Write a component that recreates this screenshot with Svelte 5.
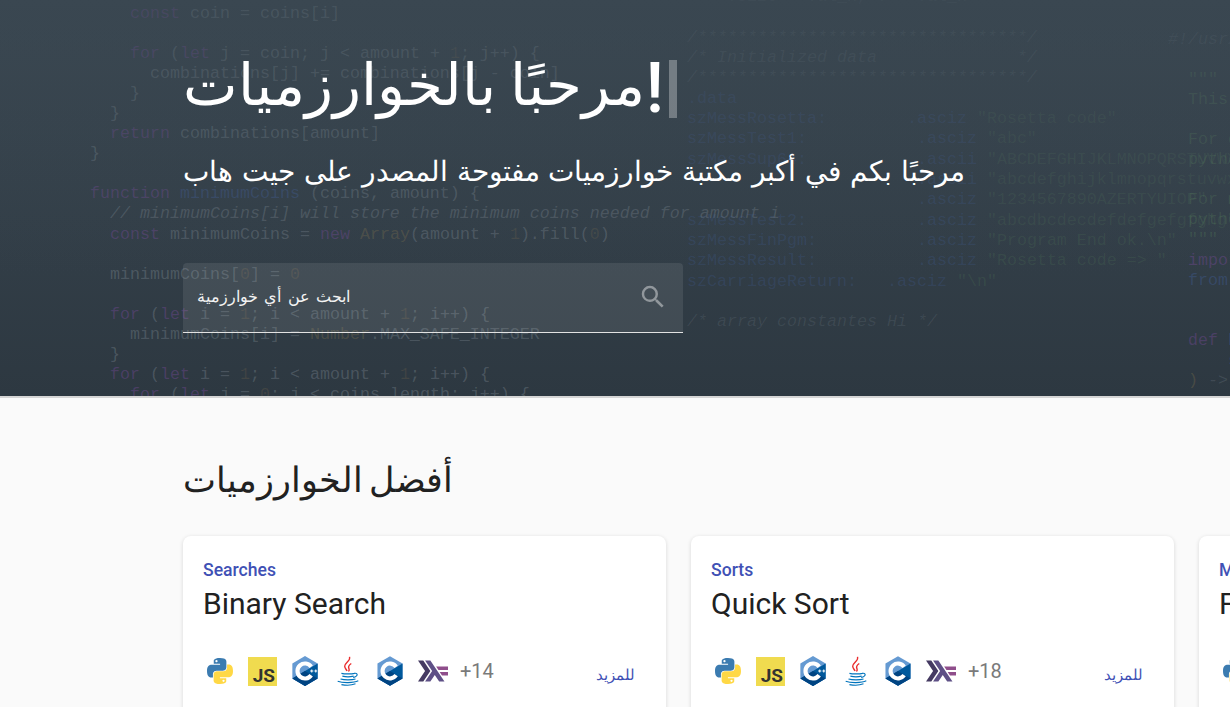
<script>
  const codeA = [
    ['    ', ['k', 'const'], ' coin = coins[i]'],
    [],
    ['    ', ['k', 'for'], ' (', ['k', 'let'], ' j = coin; j < amount + ', ['n', '1'], '; j++) {'],
    ['      combinations[j] += combinations[j - coin]'],
    ['    }'],
    ['  }'],
    ['  ', ['k', 'return'], ' combinations[amount]'],
    ['}'],
    [],
    [['k', 'function'], ' ', ['f', 'minimumCoins'], ' (coins, amount) {'],
    ['  ', ['cm', '// minimumCoins[i] will store the minimum coins needed for amount i']],
    ['  ', ['k', 'const'], ' minimumCoins = ', ['k', 'new'], ' ', ['y', 'Array'], '(amount + ', ['n', '1'], ').fill(', ['n', '0'], ')'],
    [],
    ['  minimumCoins[', ['n', '0'], '] = ', ['n', '0']],
    [],
    ['  ', ['k', 'for'], ' (', ['k', 'let'], ' i = ', ['n', '1'], '; i < amount + ', ['n', '1'], '; i++) {'],
    ['    minimumCoins[i] = ', ['y', 'Number'], '.MAX_SAFE_INTEGER'],
    ['  }'],
    ['  ', ['k', 'for'], ' (', ['k', 'let'], ' i = ', ['n', '1'], '; i < amount + ', ['n', '1'], '; i++) {'],
    ['    ', ['k', 'for'], ' (', ['k', 'let'], ' j = ', ['n', '0'], '; j < coins.length; j++) {']
  ];
  const pad = ' '.repeat(23);
  const codeB = [
    ['    .size   val_n, . - val_n'],
    [],
    [['cm', '/*********************************/']],
    [['cm', '/* Initialized data              */']],
    [['cm', '/*********************************/']],
    [['f', '.data']],
    [['f', 'szMessRosetta:'], '        ', ['f', '.asciz'], ' ', ['s', '"Rosetta code"']],
    [['f', 'szMessTest1:'], '           ', ['f', '.asciz'], ' ', ['s', '"abc"']],
    [['f', 'szMessSup64:'], '           ', ['f', '.ascii'], ' ', ['s', '"ABCDEFGHIJKLMNOPQRSTUVWXYZ"']],
    [pad, ['f', '.ascii'], ' ', ['s', '"abcdefghijklmnopqrstuvwxyz"']],
    [pad, ['f', '.asciz'], ' ', ['s', '"1234567890AZERTYUIOP"']],
    [['f', 'szMessTest2:'], '           ', ['f', '.asciz'], ' ', ['s', '"abcdbcdecdefdefgefgfghg"']],
    [['f', 'szMessFinPgm:'], '          ', ['f', '.asciz'], ' ', ['s', '"Program End ok.\\n"']],
    [['f', 'szMessResult:'], '          ', ['f', '.asciz'], ' ', ['s', '"Rosetta code => "']],
    [['f', 'szCarriageReturn:'], '   ', ['f', '.asciz'], ' ', ['s', '"\\n"']],
    [],
    [['cm', '/* array constantes Hi */']]
  ];
  const codeC = [
    [['cm', '#!/usr/bin/env python3']],
    [],
    ['  ', ['s', '"""']],
    ['  ', ['s', 'This module']],
    [],
    ['  ', ['s', 'For doctests']],
    ['  ', ['s', 'python3 -m']],
    [],
    ['  ', ['s', 'For manual']],
    ['  ', ['s', 'python3 x']],
    ['  ', ['s', '"""']],
    ['  ', ['k', 'import'], ' x'],
    ['  ', ['f', 'from'], ' x'],
    [],
    [],
    ['  ', ['k', 'def'], ' ', ['f', 'b']],
    ['      ', ['f', 's']],
    ['  ', ['y', ')'], ' -> x']
  ];
  const cards = [
    { cat: 'Searches', title: 'Binary Search', more: '+14' },
    { cat: 'Sorts', title: 'Quick Sort', more: '+18' },
    { cat: 'Maths', title: 'Fibonacci', more: '+16' }
  ];
</script>

{#snippet code(lines)}
  {#each lines as line}
    <div class="line">{#each line as part}{#if typeof part === 'string'}{part}{:else}<span class={part[0]}>{part[1]}</span>{/if}{/each}</div>
  {/each}
{/snippet}

{#snippet cpphex(plus)}
  <svg class="ic hex" viewBox="0 0 28 32" aria-hidden="true">
    <polygon points="14,0 27.5,8 27.5,24 14,32 .5,24 .5,8" fill="#659ad2" />
    <polygon points="27.5,8 27.5,24 14,32 .5,24 14,16" fill="#00599c" />
    <polygon points="14,16 .5,24 14,32 27.5,24" fill="#004482" />
    <path d="M20.6 11.5a8 8 0 1 0 0 9" fill="none" stroke="#fff" stroke-width="4.4" />
    {#if plus}
      <path d="M19.5 16h3.4M21.2 14.5v3M24 16h3M25.5 14.5v3" stroke="#fff" stroke-width="1.1" />
    {/if}
  </svg>
{/snippet}

<div class="page">
  <header class="hero">
    <div class="codebg" aria-hidden="true">
      <pre class="col a">{@render code(codeA)}</pre>
      <pre class="col b">{@render code(codeB)}</pre>
      <pre class="col c">{@render code(codeC)}</pre>
    </div>
    <div class="hero-inner">
      <h1><span class="typed">مرحبًا بالخوارزميات<span class="bang">!</span></span></h1>
      <p class="sub">مرحبًا بكم في أكبر مكتبة خوارزميات مفتوحة المصدر على جيت هاب</p>
      <div class="search">
        <span class="label">ابحث عن أي خوارزمية</span>
        <svg class="mag" viewBox="0 0 24 24" aria-hidden="true">
          <path d="M15.5 14h-.79l-.28-.27A6.47 6.47 0 0 0 16 9.5 6.5 6.5 0 1 0 9.5 16c1.61 0 3.09-.59 4.23-1.57l.27.28v.79l5 4.99L20.49 19l-4.99-5zm-6 0C7.01 14 5 11.99 5 9.5S7.01 5 9.5 5 14 7.01 14 9.5 11.99 14 9.5 14z" />
        </svg>
      </div>
    </div>
  </header>

  <main class="top">
    <h2>أفضل الخوارزميات</h2>
    <div class="cards">
      {#each cards as card}
        <article class="card">
          <div class="cat">{card.cat}</div>
          <div class="title">{card.title}</div>
          <div class="foot">
            <div class="icons">
              <svg class="ic py" viewBox="0 0 110 110" aria-hidden="true">
                <path fill="#3b7bb0" fill-rule="evenodd" d="M54.9 0C26.9 0 28.6 12.2 28.6 12.2v12.6h26.7v3.8H18S0 26.5 0 55s15.7 27.5 15.7 27.5h9.4V69.3s-.5-15.7 15.4-15.7h26.6s14.9.2 14.9-14.4V15S84.3 0 54.9 0zM40.1 8.5a4.8 4.8 0 1 1 0 9.6 4.8 4.8 0 0 1 0-9.6z" />
                <path fill="#ffd845" fill-rule="evenodd" transform="rotate(180 55 55)" d="M54.9 0C26.9 0 28.6 12.2 28.6 12.2v12.6h26.7v3.8H18S0 26.5 0 55s15.7 27.5 15.7 27.5h9.4V69.3s-.5-15.7 15.4-15.7h26.6s14.9.2 14.9-14.4V15S84.3 0 54.9 0zM40.1 8.5a4.8 4.8 0 1 1 0 9.6 4.8 4.8 0 0 1 0-9.6z" />
              </svg>
              <span class="js">JS</span>
              {@render cpphex(true)}
              <svg class="ic java" viewBox="0 0 26 32" aria-hidden="true">
                <path d="M14.5 1c2 4-5 6-5 10 0 2 1.500 3 2.500 5M16.500 8c-3 2-3.500 3.500-2.500 5.500 .5 1 .5 2-.5 3" fill="none" stroke="#ea2d2e" stroke-width="1.500" />
                <path d="M6 18.500c3 .8 11 .8 14 0M7 21.500c3 .7 9 .7 12 0M19.500 18.500c4-1 5 3-1 4.500M5 24.500c4 1.200 12 1.200 16 0M2 27c5 2 17 2 22-.5M6 30.500c5 1 11 .8 15-.8" fill="none" stroke="#0074bd" stroke-width="1.200" />
              </svg>
              {@render cpphex(false)}
              <svg class="ic hs" viewBox="0 0 17 12" aria-hidden="true">
                <path fill="#453a62" d="M0 12 4 6 0 0h3l4 6-4 6z" />
                <path fill="#5e5086" d="M4 12l4-6-4-6h3l8 12h-3L9.500 8.250 7 12z" />
                <path fill="#8f4e8b" d="M13.600 8.500 12.270 6.500H17v2zM11.600 5.500 10.270 3.500H17v2z" />
              </svg>
              <span class="more">{card.more}</span>
            </div>
            <a class="link" href="#top">للمزيد</a>
          </div>
        </article>
      {/each}
    </div>
  </main>
</div>

<style>
  :global(body) {
    margin: 0;
    background: #fafafa;
    font-family: Roboto, "Liberation Sans", sans-serif;
    overflow: hidden;
  }
  .page {
    height: 707px;
    overflow: hidden;
  }
  .hero {
    position: relative;
    height: 396px;
    overflow: hidden;
    background: linear-gradient(180deg, #3a4751 0%, #2d3841 100%);
    border-bottom: 2px solid #d5d5d5;
    color: #fff;
  }
  .codebg {
    position: absolute;
    inset: 0;
    pointer-events: none;
  }
  .codebg::after {
    content: "";
    position: absolute;
    inset: 0;
    background: linear-gradient(180deg, rgba(58, 71, 81, 0.5) 0%, rgba(50, 62, 71, 0) 70%);
  }
  .col {
    position: absolute;
    margin: 0;
    font-family: "Liberation Mono", monospace;
    font-size: 16.67px;
    line-height: 20px;
    white-space: pre;
  }
  .line {
    height: 20.05px;
  }
  .col.a {
    left: 90px;
    top: 4px;
    color: rgba(190, 200, 210, 0.21);
  }
  .col.b {
    left: 687px;
    top: -13px;
    line-height: 20.33px;
    color: rgba(190, 200, 210, 0.07);
  }
  .col.b .line {
    height: 20.33px;
  }
  .col.c {
    left: 1168px;
    top: 30px;
    color: rgba(190, 200, 210, 0.14);
  }
  .k { color: rgba(150, 80, 190, 0.28); }
  .n { color: rgba(210, 160, 90, 0.12); }
  .f { color: rgba(80, 120, 220, 0.22); }
  .y { color: rgba(210, 170, 90, 0.18); }
  .s { color: rgba(120, 190, 110, 0.16); }
  .cm { color: rgba(190, 200, 210, 0.1); font-style: italic; }
  .col.a .cm { color: rgba(190, 200, 210, 0.2); }
  .col.b .f { color: rgba(80, 120, 220, 0.15); }
  .col.b .s { color: rgba(120, 190, 110, 0.1); }
  .hero-inner {
    position: relative;
    margin-left: 183px;
    width: 864px;
  }
  h1 {
    margin: 0;
    padding-top: 60px;
    height: 60px;
    font-family: Roboto, "Liberation Sans", Arial, sans-serif;
    font-size: 58px;
    line-height: 50px;
    font-weight: 400;
  }
  .typed {
    display: inline-block;
    padding-right: 5px;
    border-right: 8px solid rgba(255, 255, 255, 0.3);
    height: 58px;
  }
  .bang {
    font-size: 70px;
    font-weight: 500;
    line-height: 0;
    vertical-align: -7px;
  }
  .sub {
    margin: 32px 0 0;
    font-family: "Liberation Sans", Arial, sans-serif;
    font-size: 28px;
    word-spacing: 1.1px;
    line-height: 40px;
  }
  .search {
    box-sizing: border-box;
    display: flex;
    align-items: center;
    justify-content: space-between;
    width: 500px;
    height: 70px;
    margin-top: 71px;
    padding: 0 15px 2px 14px;
    background: rgba(255, 255, 255, 0.09);
    border-radius: 4px 4px 0 0;
    border-bottom: 1px solid #e2e2e2;
  }
  .label {
    font-family: "Liberation Sans", Arial, sans-serif;
    font-size: 16px;
    word-spacing: 2px;
    color: #f2f2f2;
  }
  .mag {
    width: 30px;
    height: 30px;
    fill: rgba(255, 255, 255, 0.42);
  }
  .top {
    padding: 54px 0 0 183px;
  }
  h2 {
    margin: 0;
    font-family: "Liberation Sans", Arial, sans-serif;
    font-size: 34.5px;
    word-spacing: -4px;
    line-height: 56px;
    font-weight: 400;
    color: #212121;
  }
  .cards {
    display: flex;
    gap: 25px;
    margin-top: 28px;
    width: 1600px;
  }
  .card {
    box-sizing: border-box;
    width: 483px;
    height: 190px;
    padding: 22px 20px 0;
    background: #fff;
    border-radius: 8px;
    box-shadow: 0 1px 4px rgba(0, 0, 0, 0.14);
  }
  .cat {
    font-size: 17.6px;
    font-weight: 500;
    line-height: 24px;
    color: #3f51b5;
  }
  .title {
    margin-top: 4px;
    font-size: 30px;
    line-height: 36px;
    color: #212121;
  }
  .foot {
    display: flex;
    align-items: center;
    justify-content: space-between;
    margin-top: 34px;
    height: 30px;
    padding-right: 11px;
  }
  .icons {
    display: flex;
    align-items: center;
  }
  .ic {
    display: block;
    flex: none;
  }
  .py {
    width: 26px;
    height: 26px;
    margin-left: 4px;
  }
  .js {
    box-sizing: border-box;
    display: flex;
    align-items: flex-end;
    justify-content: flex-end;
    width: 29px;
    height: 29px;
    margin-left: 15px;
    padding: 0 2px 0 0;
    background: #f0db4f;
    font-size: 19px;
    line-height: 20px;
    font-weight: 700;
    color: #323330;
  }
  .hex {
    width: 28px;
    height: 30px;
    margin-left: 14px;
  }
  .java {
    width: 26px;
    height: 30px;
    margin-left: 16px;
  }
  .java + .hex {
    margin-left: 16px;
    width: 26px;
  }
  .hs {
    width: 30px;
    height: 22px;
    margin-left: 15px;
  }
  .more {
    margin-left: 12px;
    font-size: 20px;
    color: #7a7a7a;
  }
  .link {
    margin-top: 8px;
    font-family: "Liberation Sans", Arial, sans-serif;
    font-size: 15px;
    color: #3f51b5;
    text-decoration: none;
  }
</style>
